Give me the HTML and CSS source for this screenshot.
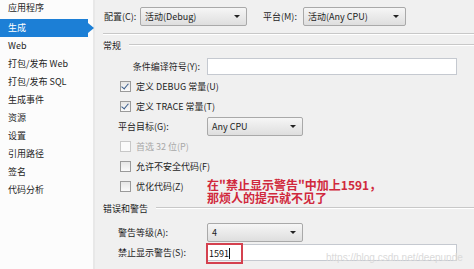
FILE: index.html
```html
<!DOCTYPE html>
<html lang="zh-CN">
<head>
  <meta charset="UTF-8" />
  <title>生成</title>
  <link rel="stylesheet" href="styles.css">
</head>
<body>
  <div class="window">
    <div class="sidebar">
      <div class="nav-item first">应用程序</div>
      <div class="nav-item active">生成</div>
      <div class="nav-item">Web</div>
      <div class="nav-item">打包/发布 Web</div>
      <div class="nav-item">打包/发布 SQL</div>
      <div class="nav-item">生成事件</div>
      <div class="nav-item">资源</div>
      <div class="nav-item">设置</div>
      <div class="nav-item">引用路径</div>
      <div class="nav-item">签名</div>
      <div class="nav-item">代码分析</div>
    </div>

    <div class="main">
      <div class="topbar">
        <span class="top-label">配置(C):</span>
        <div class="select config">活动(Debug)<span class="arrow"></span></div>
        <span class="top-label platform">平台(M):</span>
        <div class="select platform-select">活动(Any CPU)<span class="arrow"></span></div>
      </div>

      <div class="group-head"><span>常规</span><i class="rule"></i></div>

      <div class="row">
        <span class="label cond">条件编译符号(Y):</span>
        <div class="textbox wide"></div>
      </div>
      <div class="row">
        <span class="check checked"></span><span>定义 DEBUG 常量(U)</span>
      </div>
      <div class="row">
        <span class="check checked"></span><span>定义 TRACE 常量(T)</span>
      </div>
      <div class="row">
        <span class="label">平台目标(G):</span>
        <div class="select small">Any CPU<span class="arrow"></span></div>
      </div>
      <div class="row disabled">
        <span class="check"></span><span>首选 32 位(P)</span>
      </div>
      <div class="row">
        <span class="check"></span><span>允许不安全代码(F)</span>
      </div>
      <div class="row">
        <span class="check"></span><span>优化代码(Z)</span>
      </div>

      <div class="group-head errors"><span>错误和警告</span><i class="rule"></i></div>

      <div class="row">
        <span class="label">警告等级(A):</span>
        <div class="select small">4<span class="arrow"></span></div>
      </div>
      <div class="row">
        <span class="label">禁止显示警告(S):</span>
        <div class="textbox wide"><span class="mark">1591<i class="caret"></i></span></div>
      </div>

      <div class="note">在"禁止显示警告"中加上1591，<br>那烦人的提示就不见了</div>
      <div class="watermark">https://blog.csdn.net/deepunde</div>
    </div>
  </div>
</body>
</html>
```

FILE: styles.css
```css
body {
  margin: 0;
  font-family: "Noto Sans CJK SC", "Noto Sans", sans-serif;
  font-size: 9px;
  color: #1e1e1e;
}
.window {
  display: flex;
  width: 474px;
  height: 269px;
  overflow: hidden;
  background: #f0f0f0;
}
.sidebar {
  width: 93px;
  background: #fcfcfc;
  border-right: 2px solid #e8e8e8;
  flex-shrink: 0;
}
.nav-item {
  height: 18px;
  line-height: 18px;
  padding-left: 8px;
  position: relative;
}
.nav-item.first {
  height: 17px;
  line-height: 15px;
  margin-bottom: 2px;
}
.nav-item.active {
  background: #1c7fd6;
  color: #fff;
  width: 80px;
}
.nav-item.active::after {
  content: "";
  position: absolute;
  right: -6px;
  top: 4px;
  border-left: 6px solid #1c7fd6;
  border-top: 5px solid transparent;
  border-bottom: 5px solid transparent;
}
.main {
  flex: 1;
  position: relative;
}
.topbar {
  height: 33px;
  display: flex;
  align-items: center;
  margin-left: 8px;
  padding-left: 1px;
  border-bottom: 1px solid #c8c8c8;
  box-shadow: 0 1px 0 #fff;
}
.top-label {
  width: 36px;
}
.top-label.platform {
  margin-left: 16px;
  width: 40px;
}
.select {
  height: 19px;
  line-height: 17px;
  border: 1px solid #a9a9a9;
  border-radius: 2px;
  background: linear-gradient(#f6f6f6, #dedede);
  padding-left: 4px;
  position: relative;
  box-sizing: border-box;
}
.select.config {
  width: 107px;
}
.select.platform-select {
  width: 103px;
}
.select.small {
  width: 96px;
}
.arrow {
  position: absolute;
  right: 6px;
  top: 7px;
  border-top: 3px solid #222;
  border-left: 3px solid transparent;
  border-right: 3px solid transparent;
}
.group-head {
  height: 22px;
  display: flex;
  align-items: center;
  padding-left: 8px;
}
.group-head.errors {
  height: 24px;
  margin-bottom: 2px;
}
.rule {
  flex: 1;
  height: 0;
  border-top: 1px solid #c8c8c8;
  border-bottom: 1px solid #fff;
  margin-left: 8px;
}
.row {
  height: 20px;
  display: flex;
  align-items: center;
  padding-left: 25px;
}
.label {
  width: 89px;
  margin-left: -2px;
}
.label.cond {
  text-align: right;
  width: 82px;
  margin-right: 7px;
}
.textbox {
  height: 17px;
  background: #fff;
  border: 1px solid #c5c9d0;
  box-sizing: border-box;
  position: relative;
}
.textbox.wide {
  width: 250px;
}
.check {
  width: 9px;
  height: 9px;
  border: 1px solid #9a9a9a;
  background: linear-gradient(#e6e6e6, #fafafa);
  margin-right: 5px;
  position: relative;
}
.check.checked::after {
  content: "";
  position: absolute;
  left: 2px;
  top: 0;
  width: 3px;
  height: 6px;
  border-right: 1.5px solid #3b5e8c;
  border-bottom: 1.5px solid #3b5e8c;
  transform: rotate(40deg);
}
.disabled {
  color: #a8a8a8;
}
.disabled .check {
  border-color: #c8c8c8;
  background: #fafafa;
}
.mark {
  position: absolute;
  left: -2px;
  top: -2px;
  height: 17px;
  width: 32px;
  border: 2px solid #d4414f;
  line-height: 17px;
  padding-left: 1px;
  color: #111;
}
.caret {
  display: inline-block;
  width: 1px;
  height: 11px;
  background: #111;
  vertical-align: -2px;
}
.note {
  position: absolute;
  left: 112px;
  top: 178px;
  color: #d0283c;
  font-size: 12px;
  font-weight: bold;
  line-height: 13px;
}
.watermark {
  position: absolute;
  left: 231px;
  top: 252px;
  color: #dadada;
  font-family: "Liberation Sans", sans-serif;
  font-size: 10px;
}
```
